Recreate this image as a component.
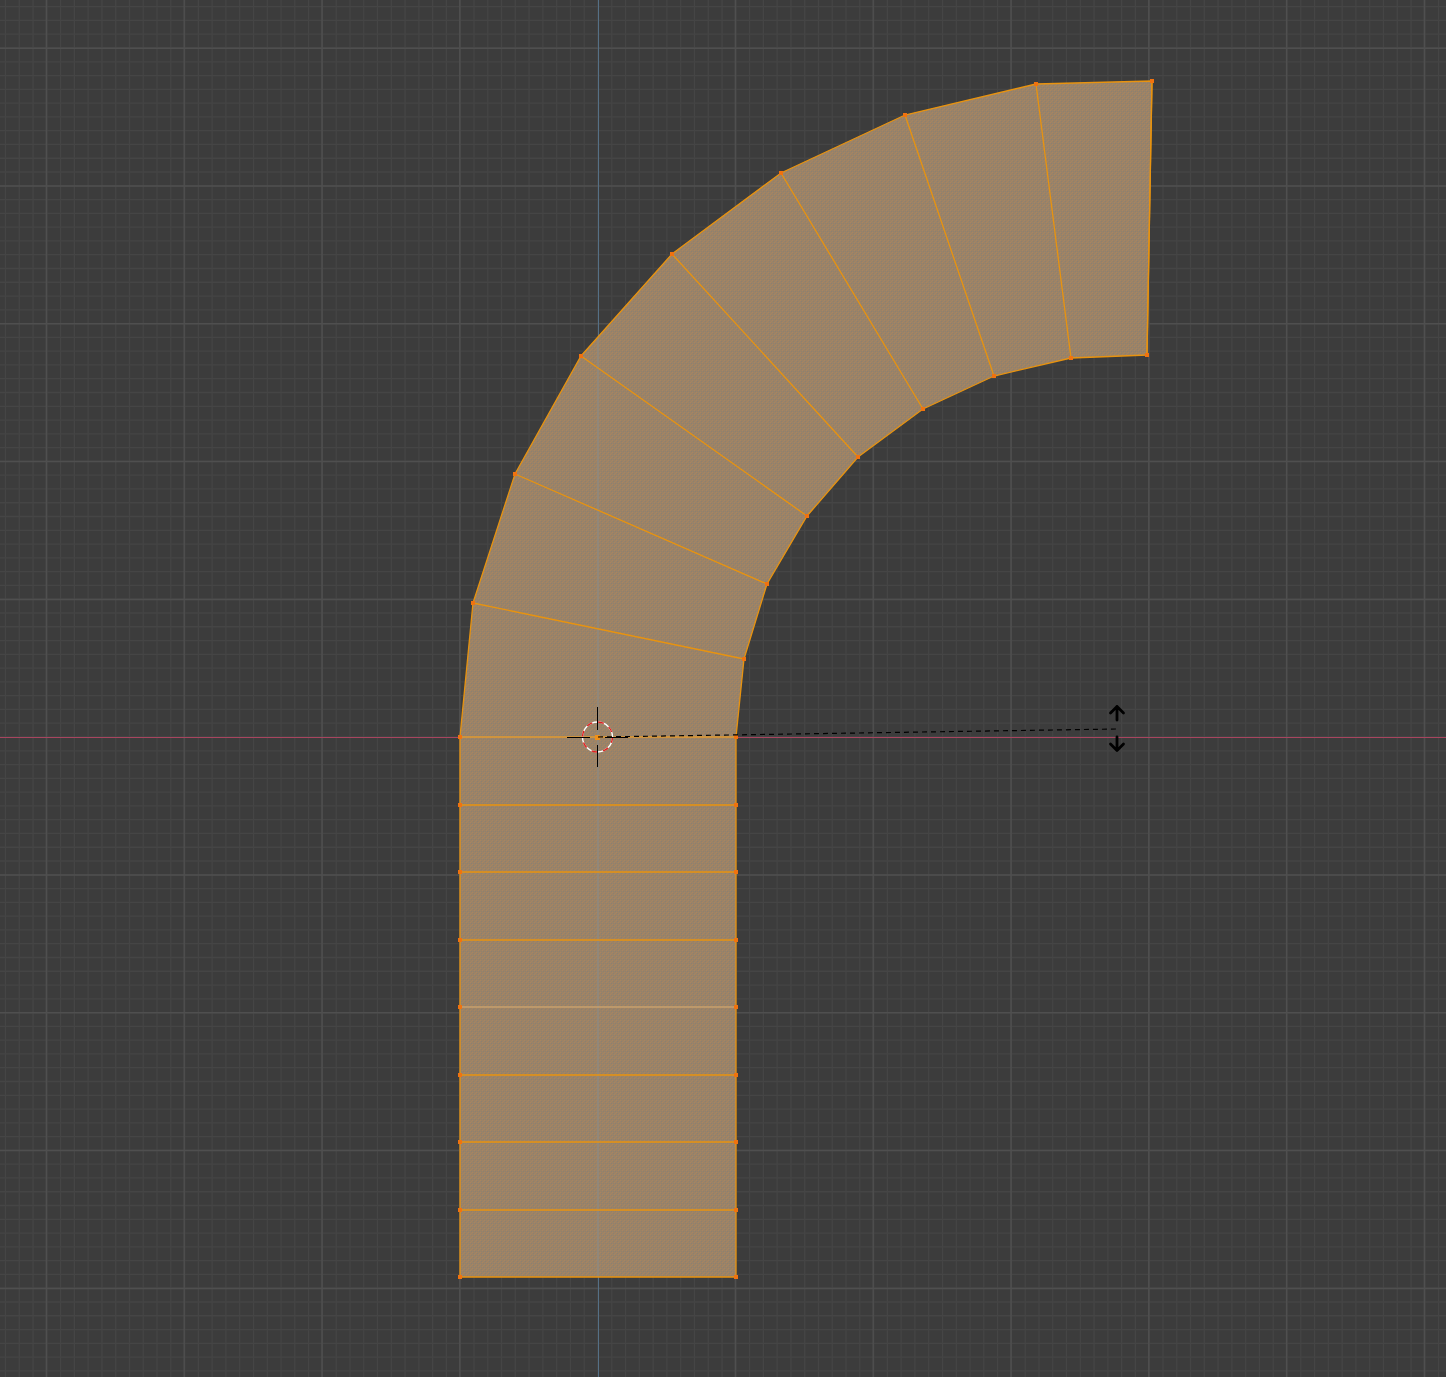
const outer: [number, number][] = [
  [460, 737], [473, 603], [515, 474], [581, 356], [672, 254], [781, 173], [905, 115], [1036, 84], [1152, 81],
];
const inner: [number, number][] = [
  [736, 737], [744, 659], [767, 584], [807, 516], [858, 457], [923, 409], [994, 376], [1071, 358], [1147, 355],
];
const rungs = [805, 872, 940, 1007, 1075, 1142, 1210];
const BOTTOM = 1277;

const STEP = 13.78;
const range = (n: number) => Array.from({ length: n }, (_, i) => i);
const minorX = range(106).map((i) => 598 - 44 * STEP + i * STEP);
const minorY = range(101).map((i) => 737 - 54 * STEP + i * STEP);
const majorX = range(11).filter((i) => i !== 4).map((i) => 46.4 + i * STEP * 10);
const majorY = range(10).filter((i) => i !== 5).map((i) => 48.2 + i * STEP * 10);

const pts = (list: [number, number][]) => list.map((p) => p.join(",")).join(" ");

const Viewport = () => {
  const shape: [number, number][] = [
    ...outer,
    ...[...inner].reverse(),
    [736, BOTTOM],
    [460, BOTTOM],
  ];
  const verts: [number, number][] = [
    ...outer,
    ...inner,
    ...rungs.flatMap((y): [number, number][] => [[460, y], [736, y]]),
    [460, BOTTOM],
    [736, BOTTOM],
  ];

  return (
    <svg width={1446} height={1377} viewBox="0 0 1446 1377" className="block">
      <defs>
        <pattern id="dither" width="4" height="4" patternUnits="userSpaceOnUse">
          <rect width="4" height="4" fill="#9b8367" />
          <rect width="1" height="1" fill="#a98560" />
          <rect x="2" y="2" width="1" height="1" fill="#a98560" />
          <rect x="1" y="1" width="1" height="1" fill="#8c8071" />
          <rect x="3" y="3" width="1" height="1" fill="#8c8071" />
          <rect x="3" y="1" width="1" height="1" fill="#a38462" />
          <rect x="1" y="3" width="1" height="1" fill="#92816d" />
        </pattern>
      </defs>

      <g fill="none">
        {minorX.map((x) => (
          <line key={x} x1={x} x2={x} y1={0} y2={1377} stroke="#454545" strokeWidth={1.3} />
        ))}
        {minorY.map((y) => (
          <line key={y} y1={y} y2={y} x1={0} x2={1446} stroke="#454545" strokeWidth={1.3} />
        ))}
        {majorX.map((x) => (
          <line key={x} x1={x} x2={x} y1={0} y2={1377} stroke="#4f4f4f" strokeWidth={1.5} />
        ))}
        {majorY.map((y) => (
          <line key={y} y1={y} y2={y} x1={0} x2={1446} stroke="#4f4f4f" strokeWidth={1.5} />
        ))}
      </g>
      <g shapeRendering="crispEdges">
        <line x1={0} x2={1446} y1={737.5} y2={737.5} stroke="#a8455f" />
        <line x1={598} x2={598} y1={0} y2={1377} stroke="#557086" />
      </g>

      <polygon points={pts(shape)} fill="url(#dither)" />
      <line x1={598} x2={598} y1={337} y2={BOTTOM} stroke="#8f8a82" strokeWidth={1.4} />

      <g stroke="#e8930f" strokeWidth={1.3} fill="none">
        <polygon points={pts(shape)} />
        {outer.slice(1).map((p, i) => (
          <line key={i} x1={p[0]} y1={p[1]} x2={inner[i + 1][0]} y2={inner[i + 1][1]} />
        ))}
        <line x1={460} x2={736} y1={737} y2={737} stroke="#e09a30" />
        {rungs.map((y) => (
          <line key={y} x1={460} x2={736} y1={y} y2={y} stroke={y === 1007 ? "#c9a06c" : "#e8930f"} />
        ))}
      </g>

      {verts.map(([x, y]) => (
        <rect key={`${x}-${y}`} x={x - 2} y={y - 2} width={4} height={4} fill="#f0720f" />
      ))}

      {/* 3d cursor */}
      <circle cx={597.5} cy={737} r={15} fill="none" stroke="#ffffff" strokeWidth={1.4} />
      <circle cx={597.5} cy={737} r={15} fill="none" stroke="#e02020" strokeWidth={1.4} strokeDasharray="5.9 5.9" />
      <g stroke="#000000" strokeWidth={1} shapeRendering="crispEdges">
        <line x1={597.5} x2={597.5} y1={707} y2={730} />
        <line x1={597.5} x2={597.5} y1={745} y2={767} />
        <line x1={567} x2={590} y1={737.5} y2={737.5} />
        <line x1={605} x2={628} y1={737.5} y2={737.5} />
      </g>
      <rect x={595} y={735} width={5} height={5} fill="#f09018" />

      {/* modal transform helper */}
      <line x1={598} y1={737} x2={1117} y2={729} stroke="#000000" strokeWidth={1.2} strokeDasharray="5 4" />
      <g stroke="#000000" strokeWidth={2.8} fill="none" strokeLinecap="round" strokeLinejoin="round">
        <path d="M1117 720 V706.5 M1110.5 713 L1117 706.5 L1123.5 713" />
        <path d="M1117 737 V750.5 M1110.5 744 L1117 750.5 L1123.5 744" />
      </g>
    </svg>
  );
};

export default function App() {
  return (
    <div className="w-[1446px] h-[1377px] overflow-hidden bg-[#3c3c3c]">
      <Viewport />
    </div>
  );
}
